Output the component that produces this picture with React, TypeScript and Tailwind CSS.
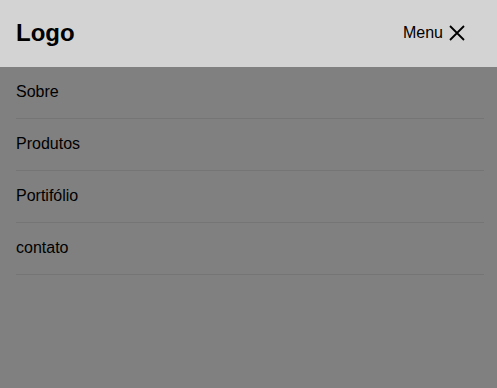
const links = ["Sobre", "Produtos", "Portifólio", "contato"];

export default function App() {
  return (
    <div className="flex min-h-screen flex-col bg-[#808080] font-['Liberation_Sans',Arial,sans-serif] text-black">
      <header className="flex items-center justify-between bg-[#d3d3d3] pb-[21px] pl-4 pr-[32px] pt-[19px]">
        <span className="text-2xl font-bold leading-[27px]">Logo</span>
        <button className="flex items-center gap-[6px] text-base leading-[19px]">
          Menu
          <svg width="16" height="16" viewBox="0 0 16 16" fill="none" stroke="currentColor" strokeWidth="1.8">
            <path d="M1 1L15 15M15 1L1 15" />
          </svg>
        </button>
      </header>

      <nav className="ml-4 mr-[13px] flex flex-col">
        {links.map((l) => (
          <a key={l} className="border-b border-[#757575] pb-[17px] pt-[15px] text-base leading-[19px]">
            {l}
          </a>
        ))}
      </nav>
    </div>
  );
}
